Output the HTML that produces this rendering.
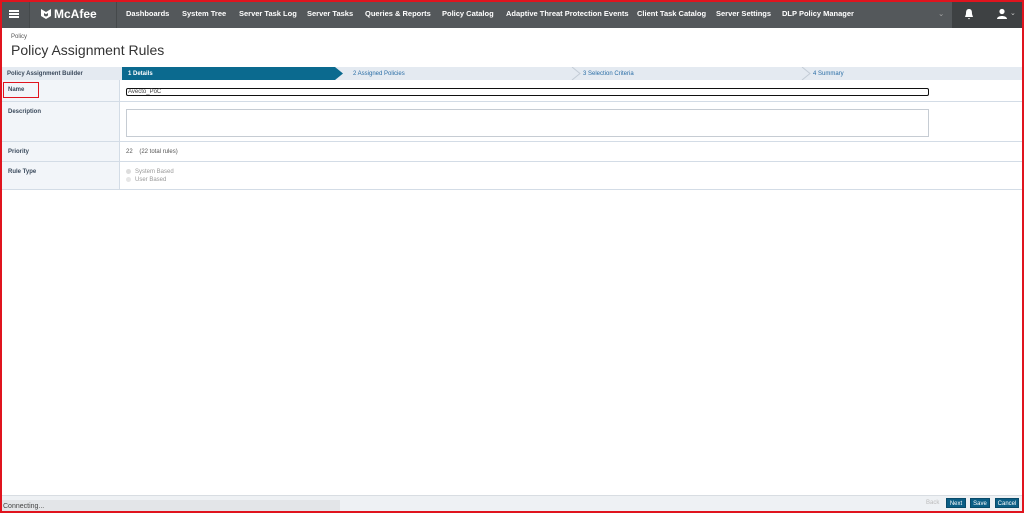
<!DOCTYPE html><html><head><style>
*{margin:0;padding:0;box-sizing:border-box}
body{width:1024px;height:513px;overflow:hidden;font-family:"Liberation Sans",sans-serif;background:#fff;position:relative}
.frame{position:absolute;inset:0;border:2px solid #e0141e;z-index:10;pointer-events:none}
.nav{position:absolute;left:0;top:0;width:1024px;height:28px;background:#54585b}
.nav span{position:absolute;top:9px;color:#fff;font-size:7.5px;font-weight:bold;white-space:nowrap}
.t{position:absolute}
.lbl{font-size:6px;font-weight:bold;color:#3b4a5c}
.row{position:absolute;left:2px;width:1020px;border-bottom:1px solid #d3dce6}
.lc{position:absolute;left:0;top:0;bottom:0;width:118px;background:#f2f5f9;border-right:1px solid #d3dce6}
.btn{position:absolute;top:498px;height:10px;background:#0b5e85;color:#fff;font-size:6px;line-height:10px;text-align:center;border:1px solid #094a69}
</style></head><body>
<div class="frame"></div>
<div class="nav">
<div style="position:absolute;left:0;top:0;width:30px;height:28px;background:#4f5356;border-right:1px solid #45494b"></div>
<div style="position:absolute;left:9px;top:10px;width:10px;height:1.5px;background:#fff;box-shadow:0 3px 0 #fff,0 6px 0 #fff"></div>
<div style="position:absolute;left:116px;top:0;width:1px;height:28px;background:#45494b"></div>
<svg class="t" style="left:40px;top:8px" width="12" height="12" viewBox="0 0 12 12"><path d="M1 1 L6 4 L11 1 V8 L6 11 L1 8 Z" fill="#fff"/><path d="M4 5 L6 6.3 L8 5 V7.5 L6 8.6 L4 7.5Z" fill="#54585b"/></svg>
<span style="left:54px;top:7px;font-size:12px">McAfee</span>
<span style="left:126px">Dashboards</span><span style="left:182px">System Tree</span><span style="left:239px">Server Task Log</span><span style="left:307px">Server Tasks</span><span style="left:365px">Queries &amp; Reports</span><span style="left:442px">Policy Catalog</span><span style="left:506px">Adaptive Threat Protection Events</span><span style="left:637px">Client Task Catalog</span><span style="left:716px">Server Settings</span><span style="left:782px">DLP Policy Manager</span>
<span style="left:938px;font-weight:normal;color:#aaa">⌄</span>
<div style="position:absolute;left:952px;top:0;width:72px;height:28px;background:#3e4143"></div>
<svg class="t" style="left:963px;top:8px" width="12" height="12" viewBox="0 0 12 12"><path d="M6 1 C3 1 3 4 3 6 L2 9 H10 L9 6 C9 4 9 1 6 1Z M5 10 H7 L6 11.5Z" fill="#fff"/></svg>
<svg class="t" style="left:996px;top:8px" width="12" height="12" viewBox="0 0 12 12"><circle cx="6" cy="3.5" r="2.6" fill="#fff"/><path d="M1 11 C1 7 11 7 11 11Z" fill="#fff"/></svg>
<span style="left:1010px;font-weight:normal;color:#ccc;font-size:7px">⌄</span>
</div>
<div class="t" style="left:11px;top:34px;font-size:6px;color:#555">Policy</div>
<div class="t" style="left:11px;top:42px;font-size:14px;color:#333">Policy Assignment Rules</div>
<div class="t" style="left:2px;top:67px;width:1020px;height:13px;background:#e4eaf1"></div>
<div class="t lbl" style="left:7px;top:71px">Policy Assignment Builder</div>
<svg class="t" style="left:122px;top:67px" width="900" height="13"><path d="M0 0 H213 L221 6.5 L213 13 H0Z" fill="#0b6a8f"/><path d="M450 0 L458 6.5 L450 13 M680 0 L688 6.5 L680 13" stroke="#c3ccd6" fill="none"/></svg>
<div class="t" style="left:128px;top:71px;font-size:6px;color:#fff;font-weight:bold">1 Details</div>
<div class="t" style="left:353px;top:71px;font-size:6px;color:#2a6ea6">2 Assigned Policies</div>
<div class="t" style="left:583px;top:71px;font-size:6px;color:#2a6ea6">3 Selection Criteria</div>
<div class="t" style="left:813px;top:71px;font-size:6px;color:#2a6ea6">4 Summary</div>
<div class="row" style="top:80px;height:22px"><div class="lc"></div></div>
<div class="row" style="top:102px;height:40px"><div class="lc"></div></div>
<div class="row" style="top:142px;height:20px"><div class="lc"></div></div>
<div class="row" style="top:162px;height:28px"><div class="lc"></div></div>
<div class="t" style="left:3px;top:82px;width:36px;height:16px;border:1.5px solid #e0141e"></div>
<div class="t lbl" style="left:8px;top:87px">Name</div>
<div class="t lbl" style="left:8px;top:109px">Description</div>
<div class="t lbl" style="left:8px;top:149px">Priority</div>
<div class="t lbl" style="left:8px;top:169px">Rule Type</div>
<div class="t" style="left:126px;top:88px;width:803px;height:8px;border:1.5px solid #111;border-radius:2px;font-size:6px;line-height:6px;color:#444;padding-left:1px">Avecto_PoC</div>
<div class="t" style="left:126px;top:109px;width:803px;height:28px;border:1px solid #c6ccd3"></div>
<div class="t" style="left:126px;top:149px;font-size:6px;color:#555">22 &nbsp;&nbsp;&nbsp;(22 total rules)</div>
<div class="t" style="left:126px;top:169px;width:5px;height:5px;border-radius:50%;background:#ddd"></div>
<div class="t" style="left:126px;top:177px;width:5px;height:5px;border-radius:50%;background:#e6e6e6"></div>
<div class="t" style="left:135px;top:169px;font-size:6px;color:#999">System Based</div>
<div class="t" style="left:135px;top:177px;font-size:6px;color:#999">User Based</div>
<div class="t" style="left:0;top:495px;width:1024px;height:18px;background:#eef1f4;border-top:1px solid #d8dde2"></div>
<div class="t" style="left:2px;top:500px;width:338px;height:11px;background:#e3e5e8;font-size:7px;color:#444;padding-left:1px;line-height:13px">Connecting...</div>
<div class="t" style="left:926px;top:500px;font-size:6px;color:#bbb">Back</div>
<div class="btn" style="left:946px;width:20px">Next</div>
<div class="btn" style="left:970px;width:20px">Save</div>
<div class="btn" style="left:995px;width:24px">Cancel</div>
</body></html>
